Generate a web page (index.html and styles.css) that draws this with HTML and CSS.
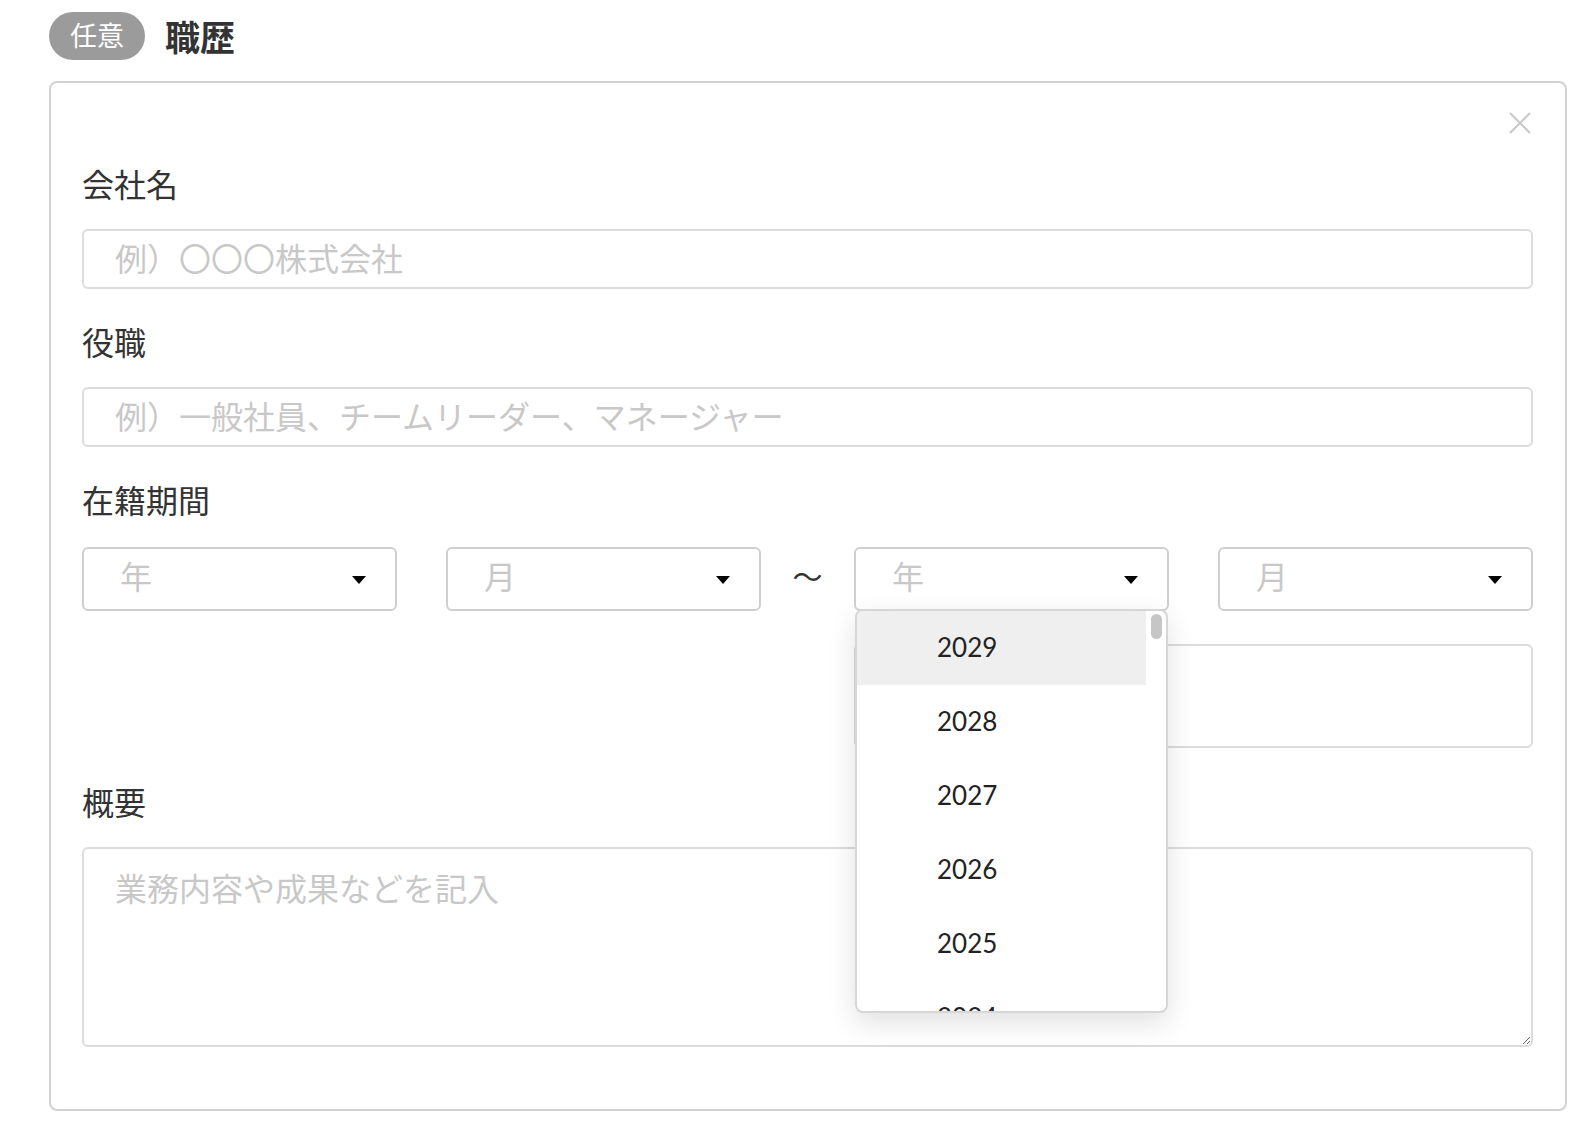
FILE: index.html
```html
<!DOCTYPE html>
<html lang="ja">
<head>
    <meta charset="UTF-8">
    <meta name="viewport" content="width=device-width, initial-scale=1.0">
    <title>職歴</title>
    <link rel="stylesheet" href="styles.css">
</head>
<body>
    <div class="section-head">
        <span class="badge">任意</span>
        <h2 class="section-title">職歴</h2>
    </div>

    <div class="card">
        <div class="card-top">
            <button class="close-btn" aria-label="削除">
                <svg width="22" height="22" viewBox="0 0 22 22">
                    <path d="M1 1 L21 21 M21 1 L1 21" stroke="#c9c9c9" stroke-width="2" fill="none"/>
                </svg>
            </button>
        </div>

        <label class="field-label" for="company">会社名</label>
        <input class="text-input" id="company" type="text" placeholder="例）〇〇〇株式会社">

        <label class="field-label" for="position">役職</label>
        <input class="text-input" id="position" type="text" placeholder="例）一般社員、チームリーダー、マネージャー">

        <div class="field-label">在籍期間</div>
        <div class="period">
            <div class="select-pair">
                <div class="select"><span class="select-text">年</span><span class="caret"></span></div>
                <div class="select"><span class="select-text">月</span><span class="caret"></span></div>
            </div>
            <div class="tilde">〜</div>
            <div class="select-pair">
                <div class="select open">
                    <span class="select-text">年</span><span class="caret"></span>
                    <!-- open year list -->
                    <div class="dropdown">
                        <ul class="dropdown-list">
                            <li class="active">2029</li>
                            <li>2028</li>
                            <li>2027</li>
                            <li>2026</li>
                            <li>2025</li>
                            <li>2024</li>
                        </ul>
                        <span class="scroll-thumb"></span>
                    </div>
                </div>
                <div class="select"><span class="select-text">月</span><span class="caret"></span></div>
            </div>
            <div class="period-extra"></div>
        </div>

        <label class="field-label" for="summary">概要</label>
        <textarea class="text-area" id="summary" placeholder="業務内容や成果などを記入"></textarea>
    </div>
</body>
</html>
```

FILE: styles.css
```css
body {
    margin: 0;
    padding: 12px 29px 0 49px;
    font-family: "Noto Sans CJK JP", "Noto Sans", sans-serif;
    color: #333;
    background: #fff;
}
.section-head {
    display: flex;
    align-items: center;
    gap: 20px;
    height: 48px;
}
.badge {
    display: inline-flex;
    align-items: center;
    justify-content: center;
    width: 96px;
    height: 48px;
    border-radius: 24px;
    background-color: #9b9b9b;
    color: #fff;
    font-size: 27px;
    line-height: 1;
    padding-bottom: 3px;
    box-sizing: border-box;
}
.section-title {
    margin: 0;
    font-size: 35px;
    font-weight: 700;
    color: #333;
    line-height: 44px;
}
.card {
    margin-top: 21px;
    border: 2px solid #d2d2d2;
    border-radius: 8px;
    padding: 0 32px 0 31px;
    height: 1030px;
    box-sizing: border-box;
}
.card-top {
    display: flex;
    justify-content: flex-end;
    padding-top: 29px;
    height: 22px;
    margin-right: 2px;
}
.close-btn {
    border: none;
    background: none;
    padding: 0;
    width: 22px;
    height: 22px;
    cursor: pointer;
}
.field-label {
    display: block;
    margin-top: 25px;
    font-size: 32px;
    line-height: 48px;
    color: #333;
}
.text-input,
.text-area {
    display: block;
    box-sizing: border-box;
    width: 100%;
    margin-top: 22px;
    border: 2px solid #dcdcdc;
    border-radius: 6px;
    font-family: "Noto Sans CJK JP", "Noto Sans", sans-serif;
    font-size: 32px;
    color: #333;
    outline: none;
}
.text-input {
    height: 60px;
    padding: 0 31px 5px;
}
.text-area {
    height: 200px;
    padding: 16px 31px;
    line-height: 44px;
}
.text-input::placeholder,
.text-area::placeholder {
    color: #c8c8c8;
}
.text-input + .field-label {
    margin-top: 28px;
}
.period + .field-label {
    margin-top: 29px;
}
.period {
    display: grid;
    grid-template-columns: 1fr 93px 1fr;
    row-gap: 33px;
    margin-top: 24px;
}
.select-pair {
    display: flex;
    gap: 49px;
}
.select {
    position: relative;
    flex: 1;
    display: flex;
    align-items: center;
    justify-content: space-between;
    box-sizing: border-box;
    height: 64px;
    padding: 0 29px 0 36px;
    border: 2px solid #cfcfcf;
    border-radius: 6px;
    background: #fff;
}
.select-text {
    font-size: 32px;
    line-height: 1;
    padding-bottom: 8px;
    color: #c8c8c8;
}
.caret {
    width: 0;
    height: 0;
    margin-top: 2px;
    border-left: 7px solid transparent;
    border-right: 7px solid transparent;
    border-top: 8px solid #000;
}
.tilde {
    display: flex;
    align-items: center;
    justify-content: center;
    padding-bottom: 8px;
    font-size: 30px;
    color: #333;
}
.period-extra {
    grid-column: 3;
    height: 104px;
    border: 2px solid #dcdcdc;
    border-radius: 6px;
    box-sizing: border-box;
}
.dropdown {
    position: absolute;
    top: 60px;
    left: -1px;
    right: -1px;
    height: 404px;
    box-sizing: border-box;
    border: 2px solid #d6d6d6;
    border-radius: 8px;
    background: #fff;
    box-shadow: 0 10px 28px rgba(0, 0, 0, 0.12);
    overflow: hidden;
    z-index: 5;
}
.dropdown-list {
    list-style: none;
    margin: 0;
    padding: 0 20px 0 0;
}
.dropdown-list li {
    height: 74px;
    line-height: 72px;
    padding-left: 80px;
    font-family: "Lato", "Noto Sans", sans-serif;
    font-size: 26px;
    color: #222;
}
.dropdown-list li.active {
    background-color: #efefef;
}
.scroll-thumb {
    position: absolute;
    top: 3px;
    right: 4px;
    width: 11px;
    height: 25px;
    border-radius: 6px;
    background-color: #c6c6c6;
}
```
